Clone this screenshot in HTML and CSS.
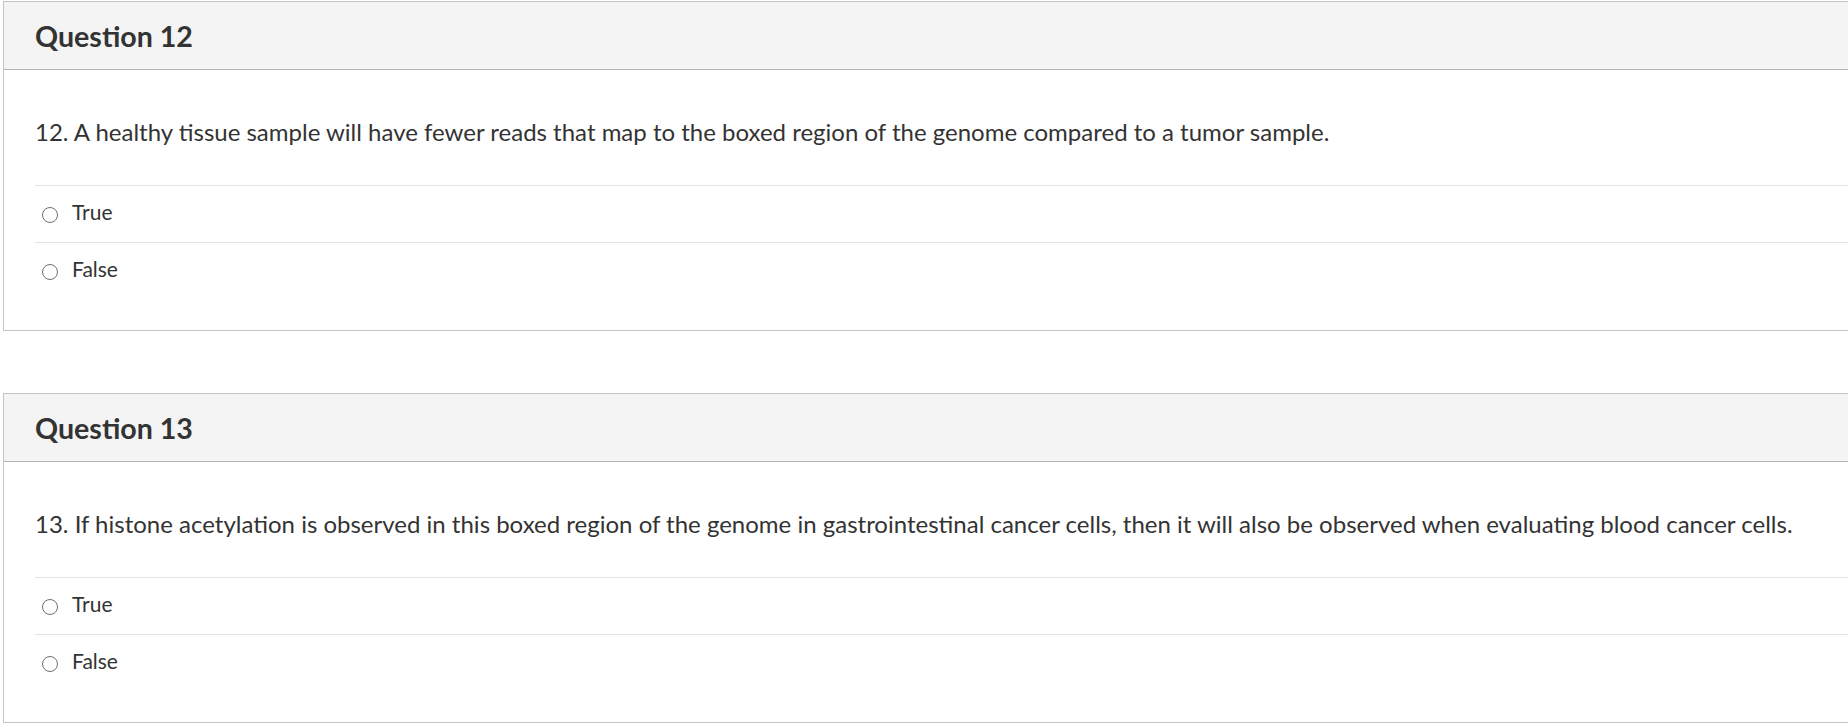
FILE: index.html
```html
<!DOCTYPE html>
<html lang="en">
<head>
<meta charset="utf-8">
<title>Quiz</title>
<link rel="stylesheet" href="styles.css">
</head>
<body>
<div class="page">
  <div class="question">
    <div class="question-header"><span class="question-title">Question 12</span></div>
    <div class="question-content">
      <div class="question-text">12. A healthy tissue sample will have fewer reads that map to the boxed region of the genome compared to a tumor sample.</div>
      <div class="answers">
        <label class="answer"><span class="radio"></span><span class="answer-label">True</span></label>
        <label class="answer"><span class="radio"></span><span class="answer-label">False</span></label>
      </div>
    </div>
  </div>
  <div class="question">
    <div class="question-header"><span class="question-title">Question 13</span></div>
    <div class="question-content">
      <div class="question-text">13. If histone acetylation is observed in this boxed region of the genome in gastrointestinal cancer cells, then it will also be observed when evaluating blood cancer cells.</div>
      <div class="answers">
        <label class="answer"><span class="radio"></span><span class="answer-label">True</span></label>
        <label class="answer"><span class="radio"></span><span class="answer-label">False</span></label>
      </div>
    </div>
  </div>
</div>
</body>
</html>
```
FILE: styles.css
```css
html, body {
  margin: 0;
  padding: 0;
  background: #ffffff;
  overflow: hidden;
}

body {
  font-family: Lato, "Open Sans", "Liberation Sans", sans-serif;
  color: #333333;
}

.page {
  padding: 1px 0 0 3px;
  display: flex;
  flex-direction: column;
  gap: 62px;
}

.question {
  border: 1px solid #c4c4c4;
  margin-right: -40px;
  background: #ffffff;
}

.question-header {
  background: #f4f4f4;
  border-bottom: 1px solid #b5b5b5;
  height: 67px;
  padding-left: 31px;
  display: flex;
  align-items: center;
}

.question-title {
  font-weight: 700;
  font-size: 28.6px;
  line-height: 68px;
  color: #333333;
}

.question-content {
  padding: 0 0 31px 31px;
}

.question-text {
  font-size: 24px;
  line-height: 34px;
  padding: 45px 0 36px 0;
}

.answers {
  display: flex;
  flex-direction: column;
}

.answer {
  border-top: 1px solid #e2e2e2;
  height: 56px;
  box-sizing: content-box;
  display: flex;
  align-items: center;
}

.radio {
  width: 14px;
  height: 14px;
  border: 1.3px solid #707070;
  border-radius: 50%;
  margin-left: 7px;
  margin-top: 2px;
  flex: none;
}

.answer-label {
  font-size: 21px;
  margin-left: 14px;
  margin-bottom: 5px;
}
```
